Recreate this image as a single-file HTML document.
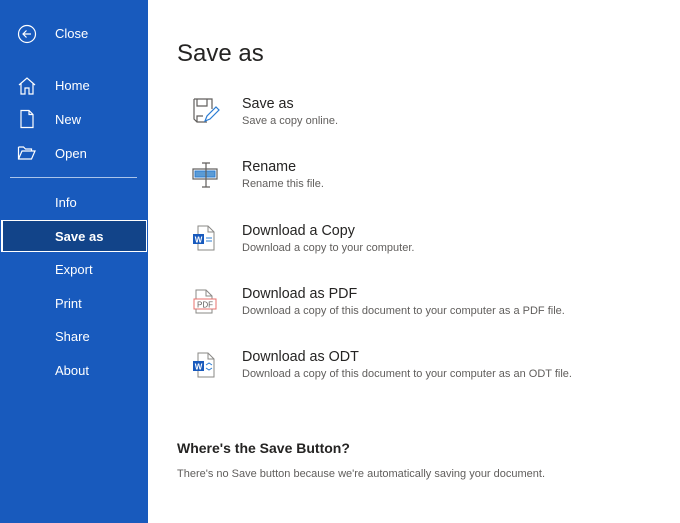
<!DOCTYPE html>
<html><head><style>
body{margin:0;width:680px;height:523px;overflow:hidden;font-family:"Liberation Sans",sans-serif;background:#fff;position:relative}
.side{position:absolute;left:0;top:0;width:148px;height:523px;background:#185abd;color:#fff}
.it{position:absolute;left:55px;font-size:13px;line-height:16px}
.ic{position:absolute;left:17px}
.sel{position:absolute;left:1px;top:220px;background:#124489;border:1px solid #fff;border-left:2px solid #fff;box-sizing:border-box;width:146px;height:32px}
h1{position:absolute;left:177px;top:40px;margin:0;font-size:24px;font-weight:normal;color:#252423}
.row{position:absolute;left:242px}
.t{font-size:14.3px;color:#252423;line-height:18px}
.d{font-size:11px;color:#605e5c;margin-top:2px;line-height:13px}
.ri{position:absolute;left:191px}
</style></head><body>
<div class="side">
<svg class="ic" style="top:24px" width="20" height="20" viewBox="0 0 20 20" fill="none" stroke="#fff" stroke-width="1.2"><circle cx="10" cy="10" r="8.5"/><path d="M14 10H6M9.5 6.5L6 10l3.5 3.5"/></svg>
<div class="it" style="top:26px">Close</div>
<svg class="ic" style="top:76px" width="20" height="20" viewBox="0 0 20 20" fill="none" stroke="#fff" stroke-width="1.2"><path d="M2 9L10 2l8 7M4 7.5V18h4v-6h4v6h4V7.5"/></svg>
<div class="it" style="top:78px">Home</div>
<svg class="ic" style="top:109px" width="20" height="20" viewBox="0 0 20 20" fill="none" stroke="#fff" stroke-width="1.2"><path d="M4 1.5h8l4 4v13H4zM12 1.5v4h4"/></svg>
<div class="it" style="top:112px">New</div>
<svg class="ic" style="top:143px" width="20" height="20" viewBox="0 0 20 20" fill="none" stroke="#fff" stroke-width="1.2"><path d="M1.5 4h5l2 2h6v2M1.5 4v12h13l3.5-8H5l-3.5 8"/></svg>
<div class="it" style="top:146px">Open</div>
<div style="position:absolute;left:10px;top:177px;width:127px;height:1px;background:#aac4ea"></div>
<div class="it" style="top:195px">Info</div>
<div class="sel"></div>
<div class="it" style="top:229px;font-weight:bold">Save as</div>
<div class="it" style="top:262px">Export</div>
<div class="it" style="top:296px">Print</div>
<div class="it" style="top:329px">Share</div>
<div class="it" style="top:363px">About</div>
</div>
<h1>Save as</h1>

<svg class="ri" style="top:96px" width="30" height="30" viewBox="0 0 30 30" fill="none"><path d="M3 3h18v10M3 3v20l3 3h10M6 3v7h10V3M6 26v-6h6" stroke="#605e5c" stroke-width="1.2"/><path d="M14 25l2-5 9-9 3 3-9 9z" stroke="#2b7cd3" stroke-width="1.2"/></svg>
<div class="row" style="top:95px"><div class="t">Save as</div><div class="d">Save a copy online.</div></div>

<svg class="ri" style="top:160px" width="30" height="30" viewBox="0 0 30 30" fill="none"><rect x="2" y="9" width="24" height="10" stroke="#605e5c" stroke-width="1.2"/><rect x="4" y="11" width="20" height="6" fill="#5b9bd5" stroke="#2b7cd3"/><path d="M11 3h8M15 3v24M11 27h8" stroke="#605e5c" stroke-width="1.2"/></svg>
<div class="row" style="top:158px"><div class="t">Rename</div><div class="d">Rename this file.</div></div>

<svg class="ri" style="top:223px" width="30" height="30" viewBox="0 0 30 30" fill="none"><path d="M7 3h10l6 6v18H7z M17 3v6h6" stroke="#8a8886" stroke-width="1" fill="#fff"/><path d="M15 15h6M15 18h6" stroke="#2b7cd3"/><rect x="2" y="11" width="11" height="10" fill="#185abd"/><text x="7.5" y="19.5" font-size="8" font-weight="bold" fill="#fff" text-anchor="middle" font-family="Liberation Sans">W</text></svg>
<div class="row" style="top:222px"><div class="t">Download a Copy</div><div class="d">Download a copy to your computer.</div></div>

<svg class="ri" style="top:287px" width="30" height="30" viewBox="0 0 30 30" fill="none"><path d="M5 12V3h10l6 6v3M15 3v6h6" stroke="#8a8886" stroke-width="1"/><rect x="3" y="12" width="22" height="10" fill="#fff" stroke="#e8706c"/><text x="14" y="20.5" font-size="8" fill="#605e5c" text-anchor="middle" font-family="Liberation Sans">PDF</text><path d="M5 22v4h16v-4" stroke="#8a8886"/></svg>
<div class="row" style="top:285px"><div class="t">Download as PDF</div><div class="d">Download a copy of this document to your computer as a PDF file.</div></div>

<svg class="ri" style="top:350px" width="30" height="30" viewBox="0 0 30 30" fill="none"><path d="M7 3h10l6 6v18H7z M17 3v6h6" stroke="#8a8886" stroke-width="1" fill="#fff"/><path d="M15 15l3-2 3 2M15 18l3 2 3-2" stroke="#2b7cd3"/><rect x="2" y="11" width="11" height="10" fill="#185abd"/><text x="7.5" y="19.5" font-size="8" font-weight="bold" fill="#fff" text-anchor="middle" font-family="Liberation Sans">W</text></svg>
<div class="row" style="top:348px"><div class="t">Download as ODT</div><div class="d">Download a copy of this document to your computer as an ODT file.</div></div>

<div style="position:absolute;left:177px;top:440px;font-size:14px;font-weight:bold;color:#252423">Where's the Save Button?</div>
<div style="position:absolute;left:177px;top:468px;font-size:11px;color:#605e5c">There's no Save button because we're automatically saving your document.</div>
</body></html>
